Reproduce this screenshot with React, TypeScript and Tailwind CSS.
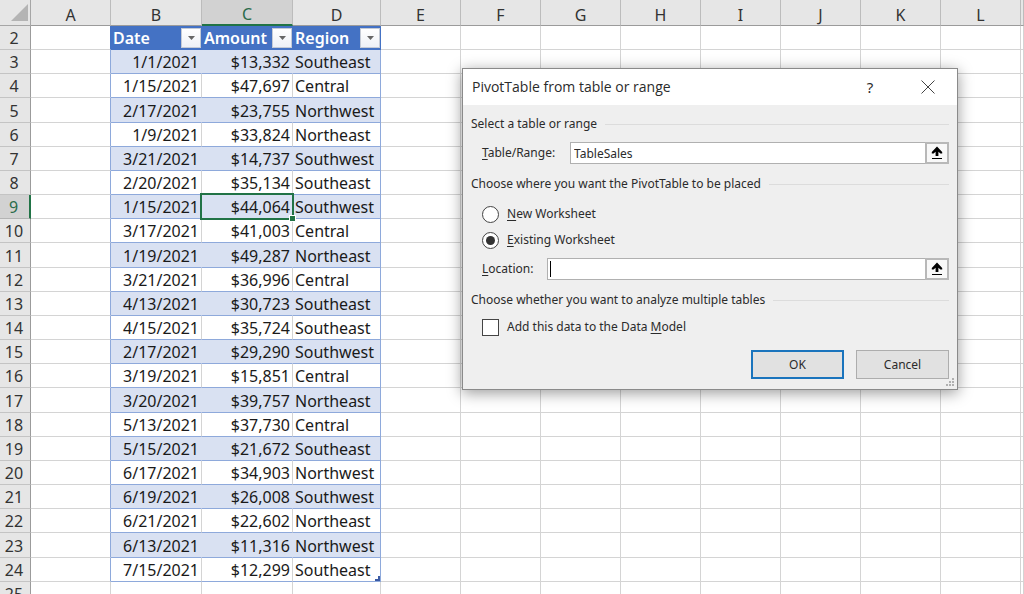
import React from 'react';
import clsx from 'clsx';

const columns = ['A', 'B', 'C', 'D', 'E', 'F', 'G', 'H', 'I', 'J', 'K', 'L', ''];
const emptyColumns = columns.slice(4);

const sales = [
  ['1/1/2021', '$13,332', 'Southeast'],
  ['1/15/2021', '$47,697', 'Central'],
  ['2/17/2021', '$23,755', 'Northwest'],
  ['1/9/2021', '$33,824', 'Northeast'],
  ['3/21/2021', '$14,737', 'Southwest'],
  ['2/20/2021', '$35,134', 'Southeast'],
  ['1/15/2021', '$44,064', 'Southwest'],
  ['3/17/2021', '$41,003', 'Central'],
  ['1/19/2021', '$49,287', 'Northeast'],
  ['3/21/2021', '$36,996', 'Central'],
  ['4/13/2021', '$30,723', 'Southeast'],
  ['4/15/2021', '$35,724', 'Southeast'],
  ['2/17/2021', '$29,290', 'Southwest'],
  ['3/19/2021', '$15,851', 'Central'],
  ['3/20/2021', '$39,757', 'Northeast'],
  ['5/13/2021', '$37,730', 'Central'],
  ['5/15/2021', '$21,672', 'Southeast'],
  ['6/17/2021', '$34,903', 'Northwest'],
  ['6/19/2021', '$26,008', 'Southwest'],
  ['6/21/2021', '$22,602', 'Northeast'],
  ['6/13/2021', '$11,316', 'Northwest'],
  ['7/15/2021', '$12,299', 'Southeast'],
];

const SELECTED_ROW = 9;
const LAST_ROW = 24;

const rowHeight = (row: number) => (row % 6 === 5 ? 'h-[25px]' : 'h-6');

const RowHeader: React.FC<{ row: number }> = ({ row }) => (
  <th
    scope="row"
    className={clsx(
      'border-b p-0 pt-px pr-0.5 font-normal',
      row === SELECTED_ROW
        ? 'border-r-2 border-r-[#217346] border-b-[#b4b4b4] bg-[#d2d2d2] text-[#2b6b4a]'
        : 'border-r border-r-[#9b9b9b] border-b-[#c4c4c4] bg-[#e6e6e6] text-[#333]',
    )}
  >
    {row}
  </th>
);

const EmptyCells: React.FC = () => (
  <>
    {emptyColumns.map((name) => (
      <td key={name} className="border-r border-b border-[#d4d4d4] p-0" />
    ))}
  </>
);

const FilterHeader: React.FC<{ label: string }> = ({ label }) => (
  <th scope="col" className="border-b border-[#4472c4] bg-[#4472c4] p-0 pt-px pl-0.5 text-white">
    <div className="flex items-center justify-between">
      <span className="font-semibold">{label}</span>
      <button
        type="button"
        aria-label={`Filter ${label}`}
        className="mr-px flex h-5 w-5 items-center justify-center border border-[#c5cbd6] bg-linear-to-b from-white to-[#eef1f7]"
      >
        <svg width="7" height="4" viewBox="0 0 7 4">
          <path d="M0 0h7L3.5 4z" fill="#666" />
        </svg>
      </button>
    </div>
  </th>
);

const Sheet: React.FC = () => (
  <table className="w-full table-fixed border-separate border-spacing-0 text-[16px] leading-5 text-[#1a1a1a]">
    <colgroup>
      <col className="w-[31px]" />
      <col className="w-20" />
      <col className="w-[91px]" />
      <col className="w-[91px]" />
      <col className="w-[88px]" />
      {emptyColumns.map((name) => (
        <col key={name} className={name ? 'w-20' : ''} />
      ))}
    </colgroup>
    <thead>
      <tr className="h-[26px] bg-[#e6e6e6]">
        <td className="border-r border-b border-[#a6a6a6] p-0">
          <svg width="17" height="17" viewBox="0 0 17 17" className="ml-[11px]">
            <path d="M17 0v17H0z" fill="#b4b4b4" />
          </svg>
        </td>
        {columns.map((name) => (
          <th
            key={name}
            scope="col"
            className={clsx(
              'p-0 font-normal',
              name === 'C'
                ? 'border-r border-b-2 border-r-[#bcbcbc] border-b-[#217346] bg-[#d2d2d2] pt-[5px] leading-[19px] text-[#2b6b4a]'
                : 'border-r border-b border-r-[#bcbcbc] border-b-[#9b9b9b] pt-[5px] text-[#333]',
            )}
          >
            {name}
          </th>
        ))}
      </tr>
    </thead>
    <tbody>
      <tr className={rowHeight(2)}>
        <RowHeader row={2} />
        <td className="border-r border-b border-r-[#4472c4] border-b-[#d4d4d4] p-0" />
        <FilterHeader label="Date" />
        <FilterHeader label="Amount" />
        <FilterHeader label="Region" />
        <EmptyCells />
      </tr>
      {sales.map(([date, amount, region], i) => {
        const row = i + 3;
        const banded = i % 2 === 0;
        const cell = clsx(
          'border-r border-b border-b-[#8ea9db] p-0 pt-px pr-0.5 text-right',
          banded ? 'border-r-[#d9e1f2] bg-[#d9e1f2]' : 'border-r-[#d4d4d4]',
        );
        return (
          <tr key={row} className={rowHeight(row)}>
            <RowHeader row={row} />
            <td className="border-r border-b border-r-[#8ea9db] border-b-[#d4d4d4] p-0" />
            <td className={cell}>{date}</td>
            <td className={clsx(cell, 'relative')}>
              {amount}
              {row === SELECTED_ROW && (
                <span className="absolute -top-0.5 -right-0.5 -bottom-0.5 -left-0.5 z-10 border-2 border-[#217346]">
                  <span className="absolute -right-[3px] -bottom-[3px] h-[5px] w-[5px] bg-[#217346] outline outline-white" />
                </span>
              )}
            </td>
            <td
              className={clsx(
                'relative border-r border-b border-[#8ea9db] p-0 pt-px pl-0.5',
                banded && 'bg-[#d9e1f2]',
              )}
            >
              {region}
              {row === LAST_ROW && (
                <svg width="5" height="5" viewBox="0 0 5 5" className="absolute right-0 bottom-0">
                  <path d="M3 0h2v5H0V3h3z" fill="#3b5ba5" />
                </svg>
              )}
            </td>
            <EmptyCells />
          </tr>
        );
      })}
      <tr className="h-6">
        <RowHeader row={25} />
        {columns.map((name) => (
          <td key={name} className="border-r border-b border-[#d4d4d4] p-0" />
        ))}
      </tr>
    </tbody>
  </table>
);

const SectionTitle: React.FC<{ children: React.ReactNode }> = ({ children }) => (
  <div className="flex h-5 items-center gap-2">
    <h3>{children}</h3>
    <div className="h-px flex-1 bg-[#dcdcdc]" />
  </div>
);

const PickRangeButton: React.FC<{ label: string }> = ({ label }) => (
  <button
    type="button"
    aria-label={label}
    className="flex h-[22px] w-6 items-center justify-center border-2 border-[#b8b8b8] bg-[#f8f8f8]"
  >
    <svg width="12" height="14" viewBox="0 0 12 14">
      <path d="M6 0.6L11.2 6v1.6H9.4L7.4 5.8V10H4.6V5.8l-2 1.8H0.8V6z" />
      <path d="M1 12h10v1H1z" />
    </svg>
  </button>
);

const radioClass =
  "grid h-[17px] w-[17px] appearance-none place-items-center rounded-full border border-[#444] bg-white checked:before:h-[9px] checked:before:w-[9px] checked:before:rounded-full checked:before:bg-[#333] checked:before:content-['']";

const PivotDialog: React.FC = () => (
  <div
    role="dialog"
    aria-labelledby="pivot-title"
    className="absolute top-[68px] left-[462px] z-20 w-[496px] border border-[#8a8a8a] bg-[#efefef] text-[12px] leading-5 text-[#2b2b2b] shadow-[0_3px_14px_rgba(0,0,0,0.4)]"
  >
    <div className="flex h-9 items-center bg-white pl-[9px]">
      <h2 id="pivot-title" className="flex-1 font-['Open_Sans',sans-serif] text-[14px]">
        PivotTable from table or range
      </h2>
      <button type="button" className="w-[58px] text-[15px]">
        ?
      </button>
      <button type="button" aria-label="Close" className="flex w-[58px] justify-center">
        <svg width="14" height="14" viewBox="0 0 14 14" stroke="#444">
          <path d="M0.5 0.5l13 13M13.5 0.5l-13 13" />
        </svg>
      </button>
    </div>

    <form className="px-2 pt-[9px] pb-2.5">
      <SectionTitle>Select a table or range</SectionTitle>
      <div className="mt-2 flex items-center pl-[11px]">
        <label htmlFor="range" className="w-[88px]">
          <u className="underline-offset-2">T</u>able/Range:
        </label>
        <input
          id="range"
          type="text"
          defaultValue="TableSales"
          className="h-[22px] min-w-0 flex-1 border border-r-0 border-[#b0b0b0] bg-white px-[3px]"
        />
        <PickRangeButton label="Select table range" />
      </div>

      <div className="mt-2.5">
        <SectionTitle>Choose where you want the PivotTable to be placed</SectionTitle>
      </div>
      <label className="mt-2.5 flex h-5 items-center gap-2 pl-[11px]">
        <input type="radio" name="place" className={radioClass} />
        <span>
          <u className="underline-offset-2">N</u>ew Worksheet
        </span>
      </label>
      <label className="mt-1.5 flex h-5 items-center gap-2 pl-[11px]">
        <input type="radio" name="place" defaultChecked className={radioClass} />
        <span>
          <u className="underline-offset-2">E</u>xisting Worksheet
        </span>
      </label>
      <div className="mt-2 flex items-center pl-[11px]">
        <label htmlFor="location" className="w-[65px]">
          <u className="underline-offset-2">L</u>ocation:
        </label>
        <div className="relative min-w-0 flex-1">
          <input
            id="location"
            type="text"
            className="block h-[22px] w-full border border-r-0 border-[#b0b0b0] bg-white px-[3px]"
          />
          {/* text caret */}
          <span className="absolute top-[3px] left-[3px] h-4 w-px bg-black" />
        </div>
        <PickRangeButton label="Select location" />
      </div>

      <div className="mt-2.5">
        <SectionTitle>Choose whether you want to analyze multiple tables</SectionTitle>
      </div>
      <label className="mt-[7px] flex h-5 items-center gap-2 pl-[11px]">
        <input
          type="checkbox"
          className="h-[17px] w-[17px] appearance-none border border-[#444] bg-white"
        />
        <span>
          Add this data to the Data <u className="underline-offset-2">M</u>odel
        </span>
      </label>

      <div className="mt-[13px] flex justify-end gap-3">
        <button type="button" className="h-[29px] w-[93px] border-2 border-[#1a74bd] bg-[#e1e1e1]">
          OK
        </button>
        <button type="button" className="h-[29px] w-[93px] border border-[#adadad] bg-[#e1e1e1]">
          Cancel
        </button>
      </div>
    </form>

    {/* resize grip */}
    <svg width="9" height="9" viewBox="0 0 9 9" fill="#b0b0b0" className="absolute right-0.5 bottom-0.5">
      <path d="M6 0h2v2H6zM6 3h2v2H6zM6 6h2v2H6zM3 3h2v2H3zM3 6h2v2H3zM0 6h2v2H0z" />
    </svg>
  </div>
);

const App: React.FC = () => (
  <main className="relative h-screen overflow-hidden bg-white font-['Noto_Sans',sans-serif]">
    <Sheet />
    <PivotDialog />
  </main>
);

export default App;
